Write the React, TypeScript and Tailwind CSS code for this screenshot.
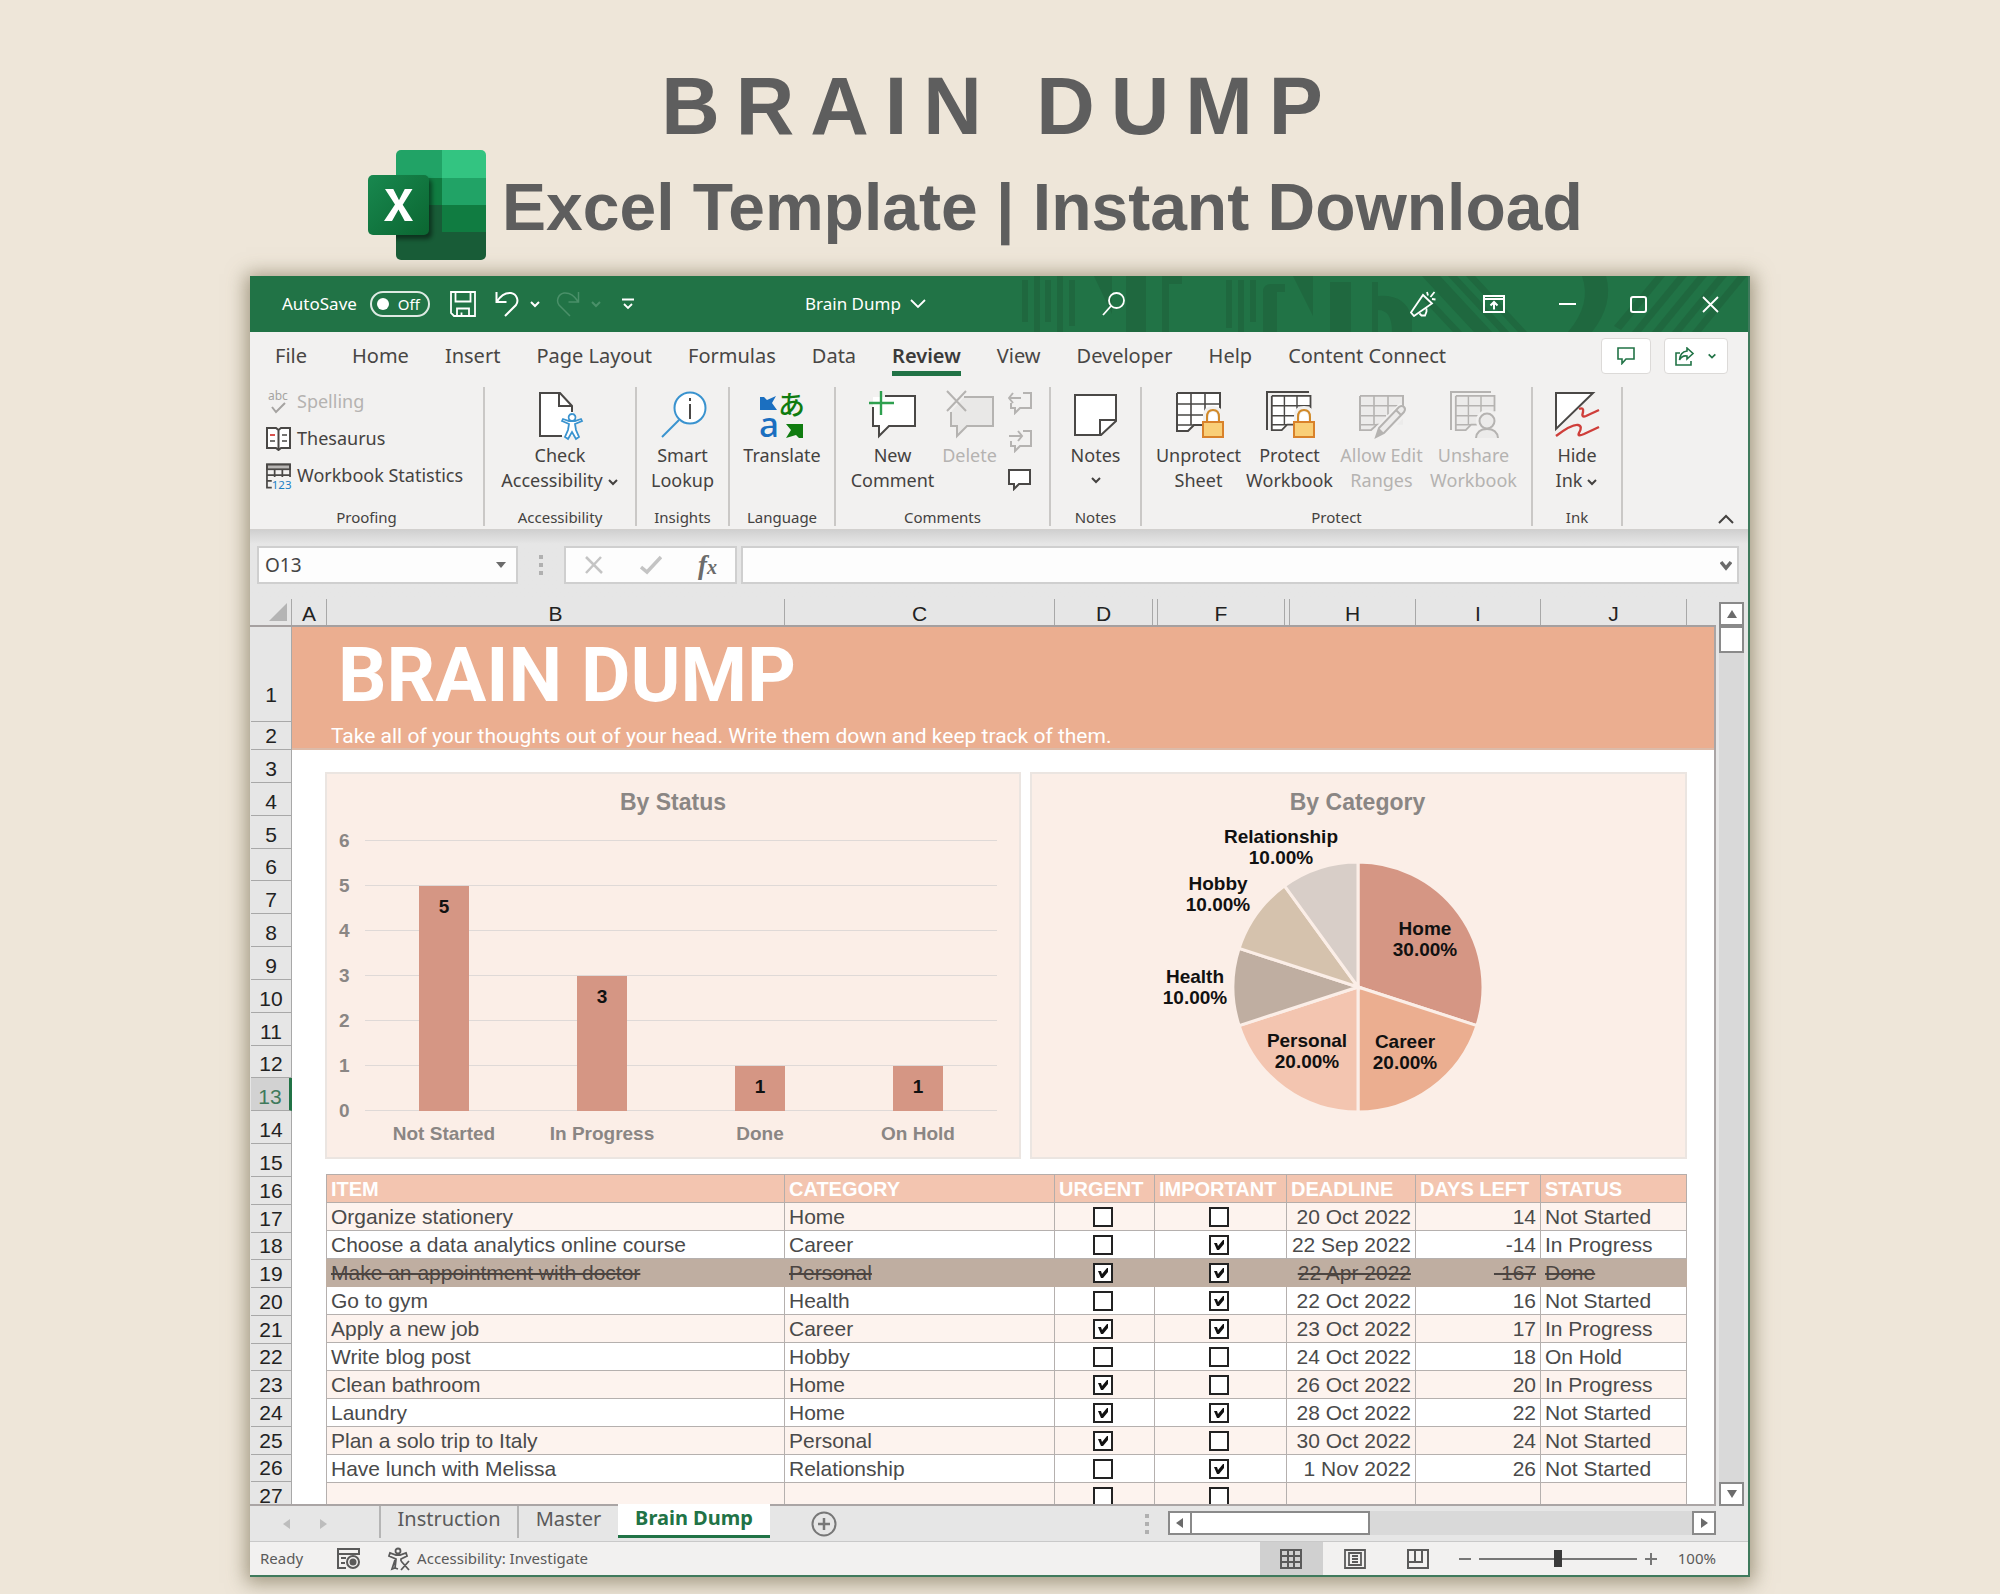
import React from "react";

const UI = "font-['Noto_Sans','Open_Sans',sans-serif]";

const Chevron = ({ className = "w-3 h-3" }: { className?: string }) => (
  <svg viewBox="0 0 12 12" className={className} fill="none" stroke="currentColor" strokeWidth="2" aria-hidden="true">
    <path d="M2 4l4 4 4-4" />
  </svg>
);

const Triangle = ({ dir }: { dir: "up" | "down" | "left" | "right" }) => {
  const d = {
    up: "M6 2l5 8H1z",
    down: "M6 10L1 2h10z",
    left: "M2 6l7-5v10z",
    right: "M10 6L3 1v10z",
  }[dir];
  return (
    <svg viewBox="0 0 12 12" className="h-3 w-3" fill="currentColor" aria-hidden="true">
      <path d={d} />
    </svg>
  );
};

function ExcelLogo() {
  return (
    <svg viewBox="0 0 118 110" className="h-[110px] w-[118px] shrink-0" role="img" aria-label="Excel">
      <defs>
        <clipPath id="page"><rect x="28" width="90" height="110" rx="5" /></clipPath>
        <linearGradient id="tile" x1="0" y1="0" x2="1" y2="1">
          <stop offset="0" stopColor="#18884f" />
          <stop offset="1" stopColor="#0b6631" />
        </linearGradient>
        <filter id="soft" x="-20%" y="-20%" width="150%" height="150%"><feGaussianBlur stdDeviation="2" /></filter>
      </defs>
      <g clipPath="url(#page)">
        <rect x="28" width="46" height="28" fill="#21a366" />
        <rect x="74" width="44" height="28" fill="#33c481" />
        <rect x="28" y="28" width="46" height="27" fill="#107c41" />
        <rect x="74" y="28" width="44" height="27" fill="#21a366" />
        <rect x="28" y="55" width="46" height="55" fill="#185c37" />
        <rect x="74" y="55" width="44" height="27" fill="#107c41" />
        <rect x="74" y="82" width="44" height="28" fill="#185c37" />
        <rect x="4" y="29" width="60" height="60" rx="5" fill="#000" opacity="0.45" filter="url(#soft)" />
      </g>
      <rect y="25" width="61" height="60" rx="5" fill="url(#tile)" />
      <path d="M16 71l11-16.500L17 39h8.300l5.700 11.200L36.800 39h7.700L34.700 54.800 45 71h-8.300l-6.200-11.600L24 71z" fill="#fff" />
    </svg>
  );
}

function TitleArt() {
  return (
    <svg viewBox="0 0 740 56" className="absolute right-0 top-0 h-14 w-[740px]" fill="#1f683f" aria-hidden="true">
      <rect x="14" y="4" width="6" height="42" />
      <rect x="26" width="6" height="56" />
      <rect x="37" y="4" width="6" height="42" />
      <rect x="49" width="6" height="56" />
      <rect x="61" y="4" width="6" height="46" />
      <path d="M86 0h18v38z" />
      <rect x="118" width="20" height="56" />
      <path d="M154 0h20v8h-13v48h-7z" />
      <rect x="218" y="4" width="6" height="48" />
      <rect x="230" y="4" width="6" height="52" />
      <rect x="242" y="4" width="6" height="42" />
      <path d="M255 56V16q0-8 8-8h14v8h-8v40z" />
      <path d="M285 0h20v40z" />
      <rect x="322" y="6" width="21" height="50" />
      <path d="M364 6h6v14q28-2 34 22v14h-20q0-22-14-22v22h-6z" />
      <path d="M414 0h18l52 56h-18zM440 0h9l52 56h-9zM458 0h9l52 56h-9zM420 20l34 36h-9l-30-32z" />
      <path d="M574 0h24q8 28-14 56h-24q24-28 14-56z" />
      <path d="M624 56l46-56h9l-46 56zM644 56l46-56h9l-46 56zM664 56l46-56h9l-46 56zM684 56l46-56h9l-46 56zM606 50l42-50h9l-44 54z" />
    </svg>
  );
}

function TitleBar() {
  return (
    <header className={`relative flex h-14 items-center bg-[#217346] text-[17px] text-white ${UI}`}>
      <TitleArt />
      <div className="relative flex w-[555px] items-center pl-8">
        <label className="flex items-center gap-[13px]">
          AutoSave
          <button role="switch" aria-checked="false" className="flex h-[26px] w-[60px] items-center justify-between rounded-full border-2 border-white/85 pl-[5px] pr-2 text-[15px]">
            <span className="h-3 w-3 rounded-full bg-white" />
            Off
          </button>
        </label>
        <button aria-label="Save" className="ml-5">
          <svg viewBox="0 0 26 26" className="h-[26px] w-[26px]" fill="none" stroke="currentColor" strokeWidth="1.800">
            <path d="M1 1h24v24H4l-3-3zM5.500 1v9.500h15V1M7 25v-7.500h12V25M11.500 25v-3.500" />
          </svg>
        </button>
        <button aria-label="Undo" className="ml-[19px]">
          <svg viewBox="0 0 24 26" className="h-[26px] w-6" fill="none" stroke="currentColor" strokeWidth="2">
            <path d="M1.500 1v10h10M2 10.500C6 4 11 1.500 16 2c6 1 8 8 5 12L10 25" />
          </svg>
        </button>
        <Chevron className="ml-2.5 h-3 w-3" />
        <button aria-label="Redo" className="ml-[15px] text-[#4a9069]">
          <svg viewBox="0 0 24 26" className="h-[26px] w-6" fill="none" stroke="currentColor" strokeWidth="1.500">
            <path d="M22.500 1v10h-10M22 10.500C18 4 13 1.500 8 2 2 3 0 10 3 14l11 11" />
          </svg>
        </button>
        <Chevron className="ml-2.5 h-3 w-3 text-[#4a9069]" />
        <button aria-label="Customize Quick Access Toolbar" className="ml-5">
          <svg viewBox="0 0 12 12" className="h-3 w-3" fill="none" stroke="currentColor" strokeWidth="1.800">
            <path d="M0 1.500h12M2 6l4 4 4-4" />
          </svg>
        </button>
      </div>
      <button className="relative flex items-center gap-[9px]">
        Brain Dump
        <svg viewBox="0 0 16 12" className="h-3 w-4" fill="none" stroke="currentColor" strokeWidth="1.800"><path d="M1 2l7 7 7-7" /></svg>
      </button>
      <button aria-label="Search" className="relative ml-44">
        <svg viewBox="0 0 24 24" className="h-6 w-6" fill="none" stroke="currentColor" strokeWidth="1.800"><circle cx="14.500" cy="8.500" r="7.500" /><path d="M9 14L1 23" /></svg>
      </button>
      <div className="relative ml-auto flex items-center pr-[29px]">
        <button aria-label="Coming soon" className="mr-[47px]">
          <svg viewBox="0 0 26 26" className="h-[26px] w-[26px]" fill="none" stroke="currentColor" strokeWidth="1.800">
            <path d="M1 21.500L13 4l9 8.500L4 25zM9.500 22.500l2 2h3.500l1.500-4v-3M17 1l1 3.500M24.500 1l-4 5M25.500 8.500L22 8" />
          </svg>
        </button>
        <button aria-label="Ribbon display options" className="mr-[54px]">
          <svg viewBox="0 0 22 18" className="h-[18px] w-[22px]" fill="none" stroke="currentColor" strokeWidth="2">
            <path d="M1 1h20v16H1zM1 4h20M11 14.500V7M7.500 10.500L11 7l3.500 3.500" />
          </svg>
        </button>
        <button aria-label="Minimize" className="mr-[54px] h-[2px] w-[17px] bg-white" />
        <button aria-label="Maximize" className="mr-[55px] h-[17px] w-[17px] rounded-[3px] border-2 border-white" />
        <button aria-label="Close">
          <svg viewBox="0 0 17 17" className="h-[17px] w-[17px]" fill="none" stroke="currentColor" strokeWidth="1.800"><path d="M1 1l15 15M16 1L1 16" /></svg>
        </button>
      </div>
    </header>
  );
}

const tabs = ["Home", "Insert", "Page Layout", "Formulas", "Data", "Review", "View", "Developer", "Help", "Content Connect"];

function TabRow() {
  return (
    <nav className={`flex h-12 items-center pl-[25px] pr-5 text-[20px] text-[#484644] ${UI}`}>
      <button className="mr-[45px]">File</button>
      <div className="flex flex-1 items-center gap-9">
        {tabs.map((t) =>
          t === "Review" ? (
            <button key={t} className="relative font-semibold text-[#3b3a39]">
              {t}
              <span className="absolute -bottom-[5px] left-0 h-[5px] w-full bg-[#217346]" />
            </button>
          ) : (
            <button key={t}>{t}</button>
          ),
        )}
      </div>
      <button aria-label="Comments" className="mr-[13px] flex h-9 w-[50px] items-center justify-center rounded-[4px] border border-[#dcdad8] bg-white text-[#217346]">
        <svg viewBox="0 0 18 18" className="h-[18px] w-[18px]" fill="none" stroke="currentColor" strokeWidth="1.600"><path d="M1 1h16v11H9l-4 4.500V12H1z" /></svg>
      </button>
      <button aria-label="Share" className="flex h-9 w-16 items-center justify-center gap-3 rounded-[4px] border border-[#dcdad8] bg-white text-[#217346]">
        <svg viewBox="0 0 20 19" className="h-[19px] w-5" fill="none" stroke="currentColor" strokeWidth="1.600"><path d="M5 6H1v12h15v-4M12 1l6 5.500-6 5.500V9q-5-1-7.500 4Q5 5 12 4z" /></svg>
        <Chevron className="h-2.5 w-2.5" />
      </button>
    </nav>
  );
}

const INK = "#4a4846";
const GREY = "#b5b3b1";

const Svg = ({ children, box = "0 0 48 48" }: { children: React.ReactNode; box?: string }) => (
  <svg viewBox={box} className="h-12 w-12 overflow-visible" fill="none" strokeWidth="2" aria-hidden="true">{children}</svg>
);

const SheetGrid = ({ c, fill = "#fff", x = 0, y = 0 }: { c: string; fill?: string; x?: number; y?: number }) => (
  <g transform={`translate(${x} ${y})`}>
    <path d="M2 1h43v32H20l-6 6H2z" fill={fill} />
    <path d="M2 1v38h11l6-6h9M2 1h43v17" stroke={c} />
    <path d="M2 12h43M2 23h26M2 33h17M16 1v32M30 1v21" stroke={c} strokeWidth="1.600" />
  </g>
);

const Lock = () => (
  <g>
    <path d="M31 31v-6q0-7 7-7t7 7v6" stroke="#f2f1f0" strokeWidth="6" />
    <path d="M32 31v-5q0-7 6-7t6 7v5" stroke="#d18a2a" />
    <rect x="28" y="31" width="20" height="15" fill="#f9cf78" stroke="#d9822b" />
  </g>
);

const icons: Record<string, React.ReactNode> = {
  check: (
    <Svg>
      <path d="M4 2h20l13 13v30H4z" fill="#fff" />
      <path d="M26 45H4V2h20l12 13v6M23 2v13h13" stroke={INK} />
      <g transform="translate(1 1)">
        <path d="M35 22a3.500 3.500 0 1 0 .1 0M25 29l7 3-1 6-3 7 3 2 4-7 4 7 3-2-3-7-1-6 7-3-1-2-6 2h-6l-6-2z" fill="#fff" stroke="#3a93cf" strokeWidth="1.800" />
      </g>
    </Svg>
  ),
  lookup: (
    <Svg>
      <circle cx="31" cy="17" r="15.500" fill="#fff" stroke="#3a93cf" />
      <path d="M20 29L3 46" stroke="#3a93cf" />
      <path d="M31 13v15M31 7v3" stroke={INK} />
    </Svg>
  ),
  translate: (
    <Svg>
      <path d="M2 6h4l3 3 9-4-4 7 5 7H2z" fill="#1b6fc0" />
      <path d="M45 47h-4l-3-3-10 3 5-8-5-6h17z" fill="#107c10" />
      <text x="1" y="46" fontSize="35" fontWeight="500" fontFamily="Noto Sans, sans-serif" fill="#1b6fc0">a</text>
      <text x="20" y="24" fontSize="27" fontWeight="500" fontFamily="'Noto Sans CJK JP', sans-serif" fill="#107c10">あ</text>
    </Svg>
  ),
  newComment: (
    <Svg>
      <path d="M4 6h42v29H20L10 45V35H4z" fill="#fff" />
      <path d="M16 5h30v30H20L10 45V35H4V16" stroke={INK} />
      <path d="M12 0v24M0 12h25" stroke="#2ea04f" strokeWidth="2.400" />
    </Svg>
  ),
  deleteComment: (
    <Svg>
      <path d="M18 6h29v29H21L11 45V35H5V21" fill="#e9e8e7" stroke={GREY} />
      <path d="M1 0l19 20M20 0L1 20" stroke={GREY} />
    </Svg>
  ),
  notes: (
    <Svg>
      <path d="M3 4h41v26L29 44H3z" fill="#fff" stroke={INK} />
      <path d="M28 44V29h16" stroke={INK} />
    </Svg>
  ),
  unprotect: <Svg><g transform="translate(0 1)"><SheetGrid c={INK} /></g><Lock /></Svg>,
  protect: (
    <Svg>
      <path d="M1 39V1h42" stroke={INK} />
      <g transform="translate(4 4) scale(.9)"><SheetGrid c={INK} /></g>
      <Lock />
    </Svg>
  ),
  allow: (
    <Svg>
      <g transform="translate(0 4) scale(1 .9)"><SheetGrid c={GREY} fill="#ecebea" /></g>
      <path d="M18 47l3-10 21-21 5 5-21 22z" fill="#ecebea" stroke="#f2f1f0" strokeWidth="6" />
      <path d="M18 46l3-9 20-21q3-2 5 0t0 5L26 42zM38 19l5 5" fill="#ecebea" stroke={GREY} />
      <path d="M18 46l3-9 5 5z" fill={GREY} />
    </Svg>
  ),
  unshare: (
    <Svg>
      <path d="M1 39V1h40" stroke={GREY} />
      <g transform="translate(4 4) scale(.9)"><SheetGrid c={GREY} fill="#ecebea" /></g>
      <circle cx="37" cy="30" r="9" fill="#ecebea" stroke="#f2f1f0" strokeWidth="4" />
      <circle cx="37" cy="30" r="7.500" fill="#ecebea" stroke={GREY} />
      <path d="M26 47q1-9 11-9t11 9" fill="#ecebea" stroke={GREY} />
    </Svg>
  ),
  ink: (
    <Svg>
      <path d="M3 2h37L3 38z" fill="#fff" stroke={INK} />
      <path d="M26 18q5-2 4 3-2 6 3 4l13-6M3 45q16-12 22-11 5 1 1 8-2 4 5 1l15-7" stroke="#cf3e3a" strokeWidth="2.400" />
    </Svg>
  ),
};

function BigButton({ icon, lines, disabled, chevron, w = "" }: { icon: string; lines: string[]; disabled?: boolean; chevron?: boolean; w?: string }) {
  return (
    <button disabled={disabled} className={`flex flex-col items-center ${w} ${disabled ? "text-[#b5b3b1]" : "text-[#444240]"}`}>
      {icons[icon]}
      <span className="mt-1 text-center text-[18px] leading-[25px] whitespace-nowrap">
        {lines[0]}
        <br />
        {lines[1]}
        {chevron && <Chevron className="ml-1 inline-block h-3 w-3" />}
      </span>
    </button>
  );
}

function Group({ label, w, children }: { label: string; w: string; children: React.ReactNode }) {
  return (
    <section className={`flex h-[139px] shrink-0 flex-col border-r-2 border-[#cac8c6] ${w}`}>
      <div className="flex flex-1 justify-center pt-1">{children}</div>
      <h2 className="text-center text-[15px] leading-[18px] text-[#444240]">{label}</h2>
    </section>
  );
}

const Bubble = ({ label, arrow, on }: { label: string; arrow?: "left" | "right"; on?: boolean }) => (
  <button aria-label={label} className="block">
    <svg viewBox="0 0 24 24" className="h-6 w-6" fill="none" stroke={on ? INK : GREY} strokeWidth="2" aria-hidden="true">
      {on ? (
        <path d="M1 3h21v14H11l-5 5v-5H1z" fill="#fff" />
      ) : (
        <path d="M15 2h8v15H12l-5 5v-5H3v-5" />
      )}
      {arrow === "left" && <path d="M13 7H1M5 2L1 7l4 5" />}
      {arrow === "right" && <path d="M1 7h13M10 2l4 5-4 5" />}
    </svg>
  </button>
);

function Ribbon() {
  return (
    <div className={`flex h-[150px] border-b border-[#d2d0ce] pt-[7px] ${UI}`}>
      <Group label="Proofing" w="w-[235px]">
        <div className="-mt-2 flex w-full flex-col pl-4 text-[18px] leading-[37px] text-[#444240]">
          <button disabled className="flex items-center gap-1.5 text-[#b5b3b1]">
            <svg viewBox="0 0 25 26" className="h-[26px] w-[25px] overflow-visible" fill="none" stroke="#a5a3a1" strokeWidth="2"><text x="2" y="11" fontSize="12" fill="#a5a3a1" stroke="none" fontFamily="Noto Sans, sans-serif">abc</text><path d="M6 18l4 5 9-9" /></svg>
            Spelling
          </button>
          <button className="flex items-center gap-1.5">
            <svg viewBox="0 0 25 25" className="h-[25px] w-[25px]" fill="#fff" stroke={INK} strokeWidth="2"><path d="M1 2h9l2.500 2L15 2h9v20h-9l-2.500 2-2.500-2H1zM12.500 3v21" /><path d="M4 9h5" stroke="#d9534f" /><path d="M4 15h5M16 9h5M16 15h5" strokeWidth="1.500" /></svg>
            Thesaurus
          </button>
          <button className="flex items-center gap-1.5">
            <svg viewBox="0 0 26 26" className="h-[26px] w-[25px] overflow-visible" fill="none" stroke={INK} strokeWidth="1.800"><rect x="1" y="1" width="24" height="5" fill="#b8b6b4" /><path d="M6 25H1V1h24v13M1 12h24M1 18h5M9 6v8M17 6v8" /><text x="6" y="26" fontSize="12" fill="#1c7fc4" stroke="none" fontFamily="Noto Sans, sans-serif">123</text></svg>
            Workbook Statistics
          </button>
        </div>
      </Group>
      <Group label="Accessibility" w="w-[152px]"><BigButton icon="check" lines={["Check", "Accessibility"]} chevron /></Group>
      <Group label="Insights" w="w-[93px]"><BigButton icon="lookup" lines={["Smart", "Lookup"]} /></Group>
      <Group label="Language" w="w-[106px]"><BigButton icon="translate" lines={["Translate", ""]} /></Group>
      <Group label="Comments" w="w-[215px]">
        <BigButton icon="newComment" lines={["New", "Comment"]} w="w-[86px]" />
        <BigButton icon="deleteComment" lines={["Delete", ""]} disabled w="w-[68px]" />
        <div className="flex flex-col gap-3.5 pl-1 pr-1">
          <Bubble label="Previous comment" arrow="left" />
          <Bubble label="Next comment" arrow="right" />
          <Bubble label="Show comments" on />
        </div>
      </Group>
      <Group label="Notes" w="w-[91px]">
        <button className="flex flex-col items-center text-[18px] leading-[25px] text-[#444240]">
          {icons.notes}
          <span className="mt-1">Notes</span>
          <Chevron className="mt-1.5 h-3 w-3" />
        </button>
      </Group>
      <Group label="Protect" w="w-[391px]">
        <BigButton icon="unprotect" lines={["Unprotect", "Sheet"]} w="w-[90px]" />
        <BigButton icon="protect" lines={["Protect", "Workbook"]} w="w-[92px]" />
        <BigButton icon="allow" lines={["Allow Edit", "Ranges"]} disabled w="w-[92px]" />
        <BigButton icon="unshare" lines={["Unshare", "Workbook"]} disabled w="w-[92px]" />
      </Group>
      <Group label="Ink" w="w-[90px]"><BigButton icon="ink" lines={["Hide", "Ink"]} chevron /></Group>
      <button aria-label="Collapse the ribbon" className="mb-1 ml-auto mr-3.5 self-end text-[#444240]">
        <svg viewBox="0 0 16 12" className="h-3 w-4" fill="none" stroke="currentColor" strokeWidth="2"><path d="M1 10l7-7 7 7" /></svg>
      </button>
    </div>
  );
}

const Dots = () => (
  <span className="flex flex-col gap-1" aria-hidden="true">
    <span className="h-1 w-1 bg-[#b0b0b0]" />
    <span className="h-1 w-1 bg-[#b0b0b0]" />
    <span className="h-1 w-1 bg-[#b0b0b0]" />
  </span>
);

function FormulaBar() {
  return (
    <div className={`flex h-[69px] items-start bg-linear-to-b from-[#d0d0d0] to-[#e6e6e6] to-20% pl-[7px] pr-[9px] pt-4 ${UI}`}>
      <div className="flex h-[38px] w-[261px] items-center border-2 border-[#cfcfcf] bg-[#fdfdfd] pl-1.5 pr-2.5 text-[#6b6b6b]">
        <input aria-label="Name box" defaultValue="O13" className="min-w-0 flex-1 text-[19px] text-[#444] outline-none" />
        <svg viewBox="0 0 10 6" className="h-1.5 w-2.5" fill="currentColor"><path d="M0 0h10L5 6z" /></svg>
      </div>
      <div className="flex h-[38px] w-[46px] items-center justify-center"><Dots /></div>
      <div className="flex h-[38px] w-[173px] items-center justify-around border-2 border-[#cfcfcf] bg-[#fdfdfd] text-[#c4c4c4]">
        <button aria-label="Cancel">
          <svg viewBox="0 0 20 20" className="h-5 w-5" fill="none" stroke="currentColor" strokeWidth="2.500"><path d="M2 2l16 16M17 2L2 18" /></svg>
        </button>
        <button aria-label="Enter">
          <svg viewBox="0 0 22 20" className="h-5 w-[22px]" fill="none" stroke="currentColor" strokeWidth="3.500"><path d="M1 12l6 5L21 2" /></svg>
        </button>
        <button aria-label="Insert function" className="font-['Liberation_Serif',serif] text-[27px] leading-none font-bold text-[#6b6b6b] italic"><i>f</i><span className="text-[20px]">x</span></button>
      </div>
      <div className="ml-1 flex h-[38px] flex-1 items-center border-2 border-[#cfcfcf] bg-[#fdfdfd] pr-[5px] text-[#6b6b6b]">
        <input aria-label="Formula" className="min-w-0 flex-1 outline-none" />
        <svg viewBox="0 0 12 12" className="h-3 w-3" fill="none" stroke="currentColor" strokeWidth="3.500"><path d="M1 3l5 6 5-6" /></svg>
      </div>
    </div>
  );
}

const colLine = "border-r border-[#a8a8a8]";
const rowNum = "flex items-end justify-center border-b border-b-[#a8a8a8] leading-none";

function ColumnHeads() {
  return (
    <div className="flex h-7 border-b-2 border-[#a5a0a0] text-[21px] leading-[29px] text-[#222]">
      <div className={`flex w-[42px] items-end justify-end pb-1 pr-1 ${colLine}`}>
        <svg viewBox="0 0 18 18" className="h-[18px] w-[18px]" fill="#b4b4b4" aria-hidden="true"><path d="M18 0v18H0z" /></svg>
      </div>
      <div className={`w-[35px] text-center ${colLine}`}>A</div>
      <div className={`flex-1 text-center ${colLine}`}>B</div>
      <div className={`w-[270px] text-center ${colLine}`}>C</div>
      <div className={`w-[98px] text-center ${colLine}`}>D</div>
      <div className={`w-[5px] ${colLine}`} />
      <div className={`w-[127px] text-center ${colLine}`}>F</div>
      <div className={`w-[5px] ${colLine}`} />
      <div className={`w-[126px] text-center ${colLine}`}>H</div>
      <div className={`w-[125px] text-center ${colLine}`}>I</div>
      <div className={`w-[146px] text-center ${colLine}`}>J</div>
      <div className="w-[29px]" />
    </div>
  );
}

function RowHeads() {
  return (
    <div className="flex w-[42px] shrink-0 flex-col border-r border-[#a8a8a8] bg-[#e6e6e6] pl-px text-[21px] text-[#222]">
      <div className={`h-[95px] shrink-0 pb-4 ${rowNum}`}>1</div>
      <div className={`h-7 shrink-0 pb-[3px] ${rowNum}`}>2</div>
      <div className="grid h-[427px] shrink-0 auto-rows-fr">
        {[3, 4, 5, 6, 7, 8, 9, 10, 11, 12, 13, 14, 15].map((n) => (
          <div key={n} className={n === 13 ? `-mr-px border-r-3 border-r-[#217346] bg-[#d2d2d2] pb-[3px] text-[#3f7a5c] ${rowNum}` : `pb-[3px] ${rowNum}`}>{n}</div>
        ))}
      </div>
      <div className="grid h-[333px] shrink-0 auto-rows-fr">
        {[16, 17, 18, 19, 20, 21, 22, 23, 24, 25, 26, 27].map((n) => (
          <div key={n} className={`pb-[3px] ${rowNum}`}>{n}</div>
        ))}
      </div>
    </div>
  );
}

const bars = [
  { name: "Not Started", value: 5 },
  { name: "In Progress", value: 3 },
  { name: "Done", value: 1 },
  { name: "On Hold", value: 1 },
];

function StatusChart() {
  return (
    <figure className="flex h-[387px] w-[696px] flex-col border-2 border-[#ebe5e1] bg-[#fbeee7] px-2 font-bold text-[#8a8684]">
      <figcaption className="pt-[15px] text-center text-[23px] leading-[27px]">By Status</figcaption>
      <div className="mt-2.5 flex">
        <div className="flex h-[300px] w-[30px] flex-col justify-between pl-1 text-[19px] leading-[30px]">
          {[6, 5, 4, 3, 2, 1, 0].map((n) => <span key={n}>{n}</span>)}
        </div>
        <div className="w-[632px]">
          <div className="relative mt-[14px] flex h-[271px] flex-col justify-between">
            {[6, 5, 4, 3, 2, 1, 0].map((n) => <span key={n} className="h-px bg-[#dfd9d7]" />)}
            <div className="absolute inset-0 grid grid-cols-4 items-end justify-items-center">
              {bars.map((b) => (
                <div key={b.name} className="w-[50px] bg-[#d59684] pt-[9px] text-center text-[19px] leading-6 text-[#111]" style={{ height: b.value * 45 }}>{b.value}</div>
              ))}
            </div>
          </div>
          <div className="grid grid-cols-4 pt-[11px] text-center text-[19px] leading-6">
            {bars.map((b) => <span key={b.name}>{b.name}</span>)}
          </div>
        </div>
      </div>
    </figure>
  );
}

const slices = [
  { name: "Home", pct: 30, color: "#d59684", x: 67, y: -52 },
  { name: "Career", pct: 20, color: "#ebae90", x: 47, y: 61 },
  { name: "Personal", pct: 20, color: "#f3c5b0", x: -51, y: 60 },
  { name: "Health", pct: 10, color: "#bfaea1", x: -163, y: -4 },
  { name: "Hobby", pct: 10, color: "#d5c2ad", x: -140, y: -97 },
  { name: "Relationship", pct: 10, color: "#d8cec8", x: -77, y: -144 },
];

function CategoryChart() {
  const r = 125;
  let start = 0;
  const point = (p: number) => `${r * Math.sin((p / 50) * Math.PI)} ${-r * Math.cos((p / 50) * Math.PI)}`;
  return (
    <figure className="h-[387px] flex-1 border-2 border-[#ebe5e1] bg-[#fbeee7] pr-0.5 font-bold text-[#8a8684]">
      <figcaption className="pt-[15px] text-center text-[23px] leading-[27px]">By Category</figcaption>
      <svg viewBox="-250 -169 500 320" className="mx-auto mt-0.5 h-[320px] w-[500px]" role="img" aria-label="Items by category">
        {slices.map((s) => {
          const from = point(start);
          start += s.pct;
          return <path key={s.name} d={`M0 0L${from}A${r} ${r} 0 0 1 ${point(start)}Z`} fill={s.color} stroke="#fbeee7" strokeWidth="3" />;
        })}
        {slices.map((s) => (
          <text key={s.name} textAnchor="middle" fontSize="19" fill="#111" fontFamily="Liberation Sans, Arial, sans-serif">
            <tspan x={s.x} y={s.y}>{s.name}</tspan>
            <tspan x={s.x} y={s.y + 21}>{s.pct}.00%</tspan>
          </text>
        ))}
      </svg>
    </figure>
  );
}

type Item = [string, string, boolean, boolean, string, string, string];
const items: Item[] = [
  ["Organize stationery", "Home", false, false, "20 Oct 2022", "14", "Not Started"],
  ["Choose a data analytics online course", "Career", false, true, "22 Sep 2022", "-14", "In Progress"],
  ["Make an appointment with doctor", "Personal", true, true, "22 Apr 2022", "-167", "Done"],
  ["Go to gym", "Health", false, true, "22 Oct 2022", "16", "Not Started"],
  ["Apply a new job", "Career", true, true, "23 Oct 2022", "17", "In Progress"],
  ["Write blog post", "Hobby", false, false, "24 Oct 2022", "18", "On Hold"],
  ["Clean bathroom", "Home", true, false, "26 Oct 2022", "20", "In Progress"],
  ["Laundry", "Home", true, true, "28 Oct 2022", "22", "Not Started"],
  ["Plan a solo trip to Italy", "Personal", true, false, "30 Oct 2022", "24", "Not Started"],
  ["Have lunch with Melissa", "Relationship", false, true, "1 Nov 2022", "26", "Not Started"],
  ["", "", false, false, "", "", ""],
];

const Tick = ({ on, label }: { on: boolean; label: string }) => (
  <label className="relative mx-auto block h-5 w-5">
    <input type="checkbox" defaultChecked={on} aria-label={label} className="peer block h-5 w-5 appearance-none border-2 border-[#222] bg-white" />
    <svg viewBox="0 0 20 20" className="pointer-events-none invisible absolute inset-0 h-5 w-5 peer-checked:visible" fill="#111" aria-hidden="true">
      <path d="M5 8h3l1 3 5-6h1v4l-5 6H8z" />
    </svg>
  </label>
);

function ItemTable() {
  return (
    <table className="w-full table-fixed border-collapse text-[21px] leading-[22px] text-[#4a4a4a]">
      <colgroup>
        <col />
        <col className="w-[270px]" />
        <col className="w-[100px]" />
        <col className="w-[132px]" />
        <col className="w-[129px]" />
        <col className="w-[125px]" />
        <col className="w-[146px]" />
      </colgroup>
      <thead>
        <tr className="h-7 bg-[#f3c5b0] text-left text-white">
          {["ITEM", "CATEGORY", "URGENT", "IMPORTANT", "DEADLINE", "DAYS LEFT", "STATUS"].map((h) => (
            <th key={h} scope="col" className="border border-[#b5adaa] py-0 pl-1 text-[20px] font-bold whitespace-nowrap">{h}</th>
          ))}
        </tr>
      </thead>
      <tbody>
        {items.map(([item, cat, urgent, important, date, days, status], i) => {
          const done = status === "Done";
          const cell = done ? "border border-[#bfaea1] px-1 py-0" : "border border-[#b5b0ae] px-1 py-0";
          const tick = done ? "border border-[#bfaea1] py-0 pr-1" : "border border-[#b5b0ae] py-0 pr-1";
          return (
            <tr key={i} className={done ? "h-7 bg-[#bfaea1] text-[#4c4541] line-through" : i % 2 ? "h-7 bg-white" : "h-7 bg-[#fdf3ee]"}>
              <td className={cell}>{item}</td>
              <td className={cell}>{cat}</td>
              <td className={tick}><Tick on={urgent} label={`Urgent: ${item || "new item"}`} /></td>
              <td className={tick}><Tick on={important} label={`Important: ${item || "new item"}`} /></td>
              <td className={`text-right whitespace-nowrap ${cell}`}>{date}</td>
              <td className={`text-right ${cell}`}>{days}</td>
              <td className={cell}>{status}</td>
            </tr>
          );
        })}
      </tbody>
    </table>
  );
}

function Sheet() {
  return (
    <div className="flex font-['Liberation_Sans',Arial,sans-serif]">
      <div className="flex min-w-0 flex-1 flex-col">
        <ColumnHeads />
        <div className="flex h-[879px] overflow-hidden border-r-2 border-b-2 border-[#aaa5a5] bg-white">
          <RowHeads />
          <div className="min-w-0 flex-1">
            <div className="h-[123px] border-b-2 border-[#dcbba9] bg-[#ebae90] text-white font-['Roboto',sans-serif]">
              <h1 className="pl-[46px] pt-2 text-[76px] leading-[80px] font-bold">BRAIN DUMP</h1>
              <p className="pl-[39px] pt-[9px] text-[21px] leading-6">Take all of your thoughts out of your head. Write them down and keep track of them.</p>
            </div>
            <div className="flex gap-[9px] pl-[33px] pr-[27px] pt-[22px]">
              <StatusChart />
              <CategoryChart />
            </div>
            <div className="pl-[34px] pr-[27px] pt-[15px]"><ItemTable /></div>
          </div>
        </div>
      </div>
      <div className="flex w-8 flex-col pl-[3px] pr-1 pt-[3px] text-[#6b6b6b]">
        <button aria-label="Scroll up" className="flex h-6 items-center justify-center border-2 border-[#8a8a8a] bg-white"><Triangle dir="up" /></button>
        <div className="flex-1 bg-[#d9d9d9]"><div className="h-[27px] border-2 border-[#8a8a8a] bg-white" /></div>
        <button aria-label="Scroll down" className="flex h-6 items-center justify-center border-2 border-[#8a8a8a] bg-white"><Triangle dir="down" /></button>
      </div>
    </div>
  );
}

function SheetTabs() {
  return (
    <div className={`flex h-[35px] pr-8 text-[20px] leading-[26px] text-[#5a5a5a] ${UI}`}>
      <div className="flex w-[129px] items-center gap-6 pl-[31px] text-[#bdbdbd]">
        <Triangle dir="left" />
        <Triangle dir="right" />
      </div>
      <button className="h-8 w-[140px] border-x-2 border-[#b5b5b5] pb-1.5">Instruction</button>
      <button className="h-8 w-[99px] pb-1.5">Master</button>
      <button className="-mt-0.5 h-[34px] w-[152px] border-b-[3px] border-[#217346] bg-white pb-1 font-bold text-[#217346]">Brain Dump</button>
      <button aria-label="New sheet" className="ml-[41px] self-center text-[#777]">
        <svg viewBox="0 0 26 26" className="h-[26px] w-[26px]" fill="none" stroke="currentColor" strokeWidth="2"><circle cx="13" cy="13" r="11.500" /><path d="M13 7v12M7 13h12" strokeWidth="2.500" /></svg>
      </button>
      <div className="ml-auto flex items-center"><Dots /></div>
      <div className="ml-[19px] mt-[5px] flex h-6 w-[548px] bg-[#d9d9d9] text-[#6b6b6b]">
        <button aria-label="Scroll left" className="flex w-6 items-center justify-center border-2 border-[#8a8a8a] bg-white"><Triangle dir="left" /></button>
        <div className="-ml-0.5 w-[180px] border-2 border-[#8a8a8a] bg-white" />
        <button aria-label="Scroll right" className="ml-auto flex w-6 items-center justify-center border-2 border-[#8a8a8a] bg-white"><Triangle dir="right" /></button>
      </div>
    </div>
  );
}

function StatusBar() {
  return (
    <footer className={`flex h-[34px] items-center border-t border-[#c9c9c9] bg-[#f2f1f0] pl-2.5 pr-8 text-[15px] text-[#5a5a5a] ${UI}`}>
      <span>Ready</span>
      <button aria-label="Record macro" className="ml-[34px]">
        <svg viewBox="0 0 24 22" className="h-[22px] w-6" fill="none" stroke="currentColor" strokeWidth="2"><path d="M9 20H1V1h21v6M1 6h21M4 10h5M4 15h4" /><circle cx="16" cy="14" r="6" /><circle cx="16" cy="14" r="2.500" fill="currentColor" /></svg>
      </button>
      <button className="ml-[26px] flex items-center gap-1.5">
        <svg viewBox="0 0 24 24" className="h-6 w-6" fill="none" stroke="currentColor" strokeWidth="1.800"><circle cx="11" cy="4" r="2.500" /><path d="M11 22l-3-1 1-9-7-3 1-3 6 2h4l6-2 1 3-6 3v2M8 21l-3 1 3-9M14 14l8 9M22 14l-8 9" /></svg>
        Accessibility: Investigate
      </button>
      <div className="ml-auto flex h-full items-center">
        <button aria-label="Normal view" className="flex h-full w-[63px] items-center justify-center bg-[#d0d0d0]">
          <svg viewBox="0 0 22 20" className="h-5 w-[22px]" fill="none" stroke="currentColor" strokeWidth="2"><path d="M1 1h20v18H1zM1 7h20M1 13h20M8 1v18M14 1v18" /></svg>
        </button>
        <button aria-label="Page layout view" className="flex w-16 justify-center">
          <svg viewBox="0 0 22 20" className="h-5 w-[22px]" fill="none" stroke="currentColor" strokeWidth="1.800"><path d="M1 1h20v18H1zM5 4h12v12H5zM8 7h6M8 10h6M8 13h6" /></svg>
        </button>
        <button aria-label="Page break preview" className="flex w-[63px] justify-center">
          <svg viewBox="0 0 22 20" className="h-5 w-[22px]" fill="none" stroke="currentColor" strokeWidth="2"><path d="M1 1h20v18H1zM1 13h14V1M8 1v12" /></svg>
        </button>
        <button aria-label="Zoom out" className="ml-[9px] h-0.5 w-3 bg-[#777]" />
        <input type="range" aria-label="Zoom" min="0" max="200" defaultValue="100" className="mx-2 h-[26px] w-[158px] appearance-none bg-[linear-gradient(#777,#777)] bg-[length:100%_2px] bg-center bg-no-repeat [&::-webkit-slider-thumb]:h-[17px] [&::-webkit-slider-thumb]:w-2 [&::-webkit-slider-thumb]:appearance-none [&::-webkit-slider-thumb]:bg-[#3a3a3a]" />
        <button aria-label="Zoom in">
          <svg viewBox="0 0 12 12" className="h-3 w-3" fill="none" stroke="#777" strokeWidth="2"><path d="M6 0v12M0 6h12" /></svg>
        </button>
        <span className="ml-[21px]">100%</span>
      </div>
    </footer>
  );
}

export default function App() {
  return (
    <main className="min-h-screen bg-[#eee6d9] pb-[18px]">
      <div className="h-[276px] pt-[63px] font-['Liberation_Sans',Arial,sans-serif] font-bold text-[#5e5e5e]">
        <p className="text-center text-[81px] leading-[87px] tracking-[16px]">BRAIN DUMP</p>
        <div className="flex items-center pl-[18.400%]">
          <ExcelLogo />
          <p className="pl-4 pt-1 text-[66px] leading-[106px] whitespace-nowrap">Excel Template | Instant Download</p>
        </div>
      </div>
      <div className="mx-auto w-3/4 border-r-2 border-b-2 border-[#3f7a5c] bg-[#e6e6e6] shadow-[0_2px_18px_4px_rgba(110,100,70,0.6)]">
        <TitleBar />
        <div className="bg-[#f2f1f0]">
          <TabRow />
          <Ribbon />
        </div>
        <FormulaBar />
        <Sheet />
        <SheetTabs />
        <StatusBar />
      </div>
    </main>
  );
}
